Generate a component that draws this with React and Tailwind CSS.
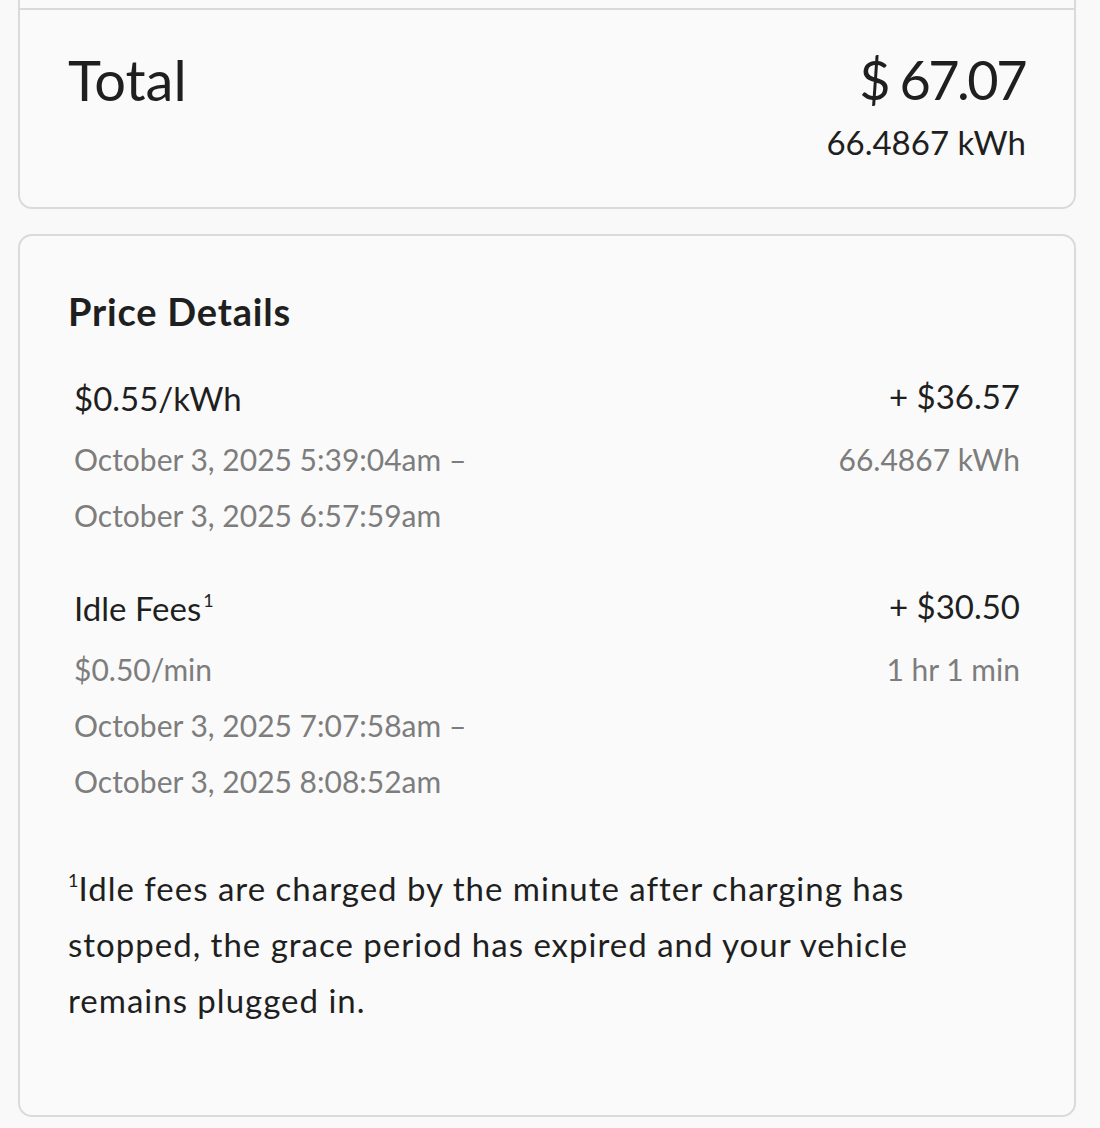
const font = { fontFamily: 'Lato, "Open Sans", sans-serif' };

function Row({ title, sup, amount, lines, right }) {
  return (
    <div className="flex justify-between px-[6px]">
      <div>
        <div className="h-[48px] text-[33px] leading-[48px] text-[#1f1f1f]">
          {title}
          {sup && <sup className="text-[18px] -top-[14px] ml-[2px]">{sup}</sup>}
        </div>
        <div className="mt-[9px] text-[30px] leading-[56px] text-[#7d7d7d]">
          {lines.map(l => <div key={l}>{l}</div>)}
        </div>
      </div>
      <div className="text-right">
        <div className="h-[48px] text-[33px] leading-[44px] text-[#1f1f1f]">{amount}</div>
        <div className="mt-[9px] text-[30px] leading-[56px] text-[#7d7d7d]">{right}</div>
      </div>
    </div>
  );
}

export default function App() {
  return (
    <div className="h-[1128px] overflow-hidden bg-[#f9f9f9]" style={font}>
      {/* total card, top part is cut off */}
      <div className="-mt-[40px] ml-[18px] w-[1058px] rounded-[14px] border-2 border-[#dadada] bg-[#fafafa]">
        <div className="h-[48px] border-b-2 border-[#dadada]" />
        <div className="flex justify-between px-[48px] pt-[40px] pb-[39px]">
          <div className="text-[56px] leading-[60px] text-[#1f1f1f]">Total</div>
          <div className="text-right">
            <div className="mr-[1px] text-[54px] leading-[60px] tracking-[-2.5px] text-[#1f1f1f]">$ 67.07</div>
            <div className="mt-[6px] text-[33px] leading-[52px] text-[#1f1f1f]">66.4867 kWh</div>
          </div>
        </div>
      </div>

      <div className="mt-[25px] ml-[18px] w-[1058px] rounded-[14px] border-2 border-[#dadada] bg-[#fafafa] px-[48px] pt-[51px] pb-[87px]">
        <h2 className="text-[38px] font-bold leading-[48px] tracking-[0.8px] text-[#1f1f1f]">Price Details</h2>
        <div className="mt-[39px]">
          <Row
            title="$0.55/kWh"
            amount="+ $36.57"
            lines={['October 3, 2025 5:39:04am –', 'October 3, 2025 6:57:59am']}
            right="66.4867 kWh"
          />
        </div>
        <div className="mt-[41px]">
          <Row
            title="Idle Fees"
            sup="1"
            amount="+ $30.50"
            lines={['$0.50/min', 'October 3, 2025 7:07:58am –', 'October 3, 2025 8:08:52am']}
            right="1 hr 1 min"
          />
        </div>
        <p className="mt-[51px] w-[880px] text-[33px] leading-[56px] tracking-[1px] text-[#1f1f1f]">
          <sup className="text-[18px] -top-[14px] tracking-normal">1</sup>Idle fees are charged by the minute after charging has stopped, the grace period has expired and your vehicle remains plugged in.
        </p>
      </div>
    </div>
  );
}
